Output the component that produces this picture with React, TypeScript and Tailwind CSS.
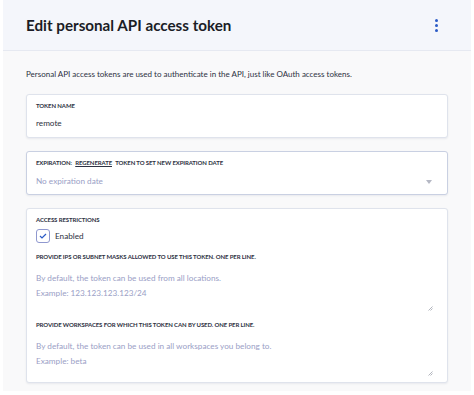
import React from 'react';

const Label: React.FC<{ children: React.ReactNode }> = ({ children }) => (
  <div className="text-[6px] font-bold uppercase leading-none tracking-[-0.1px] text-[#2d3142]">{children}</div>
);

const Grip = () => (
  <svg width="5" height="5" viewBox="0 0 5 5" className="absolute bottom-[0px] right-[5px]">
    <path d="M4.5 0.5 L0.5 4.5 M4.5 2.5 L2.5 4.5" stroke="#a0a3ad" strokeWidth="0.8" />
  </svg>
);

export default function App() {
  return (
    <div className="h-[395px] w-[474px] overflow-hidden bg-white" style={{ fontFamily: 'Lato, "Noto Sans", sans-serif' }}>
      <div className="mx-[3px] h-[391px] bg-[#f9f9fa]">
        <div className="flex h-[51px] items-center justify-between border-b border-[#e6e9f1] bg-[#f4f6fb] pl-[23px] pr-[33px]">
          <h1 className="text-[15.2px] font-bold text-[#1b1d26]">Edit personal API access token</h1>
          <div className="flex flex-col gap-[2px]">
            <span className="h-[3px] w-[3px] rounded-full bg-[#2b5bc6]" />
            <span className="h-[3px] w-[3px] rounded-full bg-[#2b5bc6]" />
            <span className="h-[3px] w-[3px] rounded-full bg-[#2b5bc6]" />
          </div>
        </div>

        <div className="px-[23px]">
          <p className="pt-[17px] text-[8px] leading-[12px] text-[#2d3142]">
            Personal API access tokens are used to authenticate in the API, just like OAuth access tokens.
          </p>

          <div className="mt-[14px] h-[44px] rounded-[3px] border border-[#dfe3ec] bg-white px-[9px] pt-[8px] shadow-[0_1px_2px_rgba(40,50,90,0.08)]">
            <Label>Token name</Label>
            <div className="mt-[10px] text-[8.2px] leading-none text-[#2d3142]">remote</div>
          </div>

          <div className="relative mt-[13px] h-[44px] rounded-[3px] border border-[#c9d0e2] bg-white px-[9px] pt-[8px] shadow-[0_1px_2px_rgba(40,50,90,0.08)]">
            <Label>
              Expiration: <span className="ml-[2px] mr-[2px] underline">Regenerate</span> token to set new expiration date
            </Label>
            <div className="mt-[11px] text-[8.2px] leading-none text-[#9aa0c6]">No expiration date</div>
            <svg width="6" height="4" viewBox="0 0 6 4" className="absolute right-[15px] top-[28px]">
              <path d="M0 0 L6 0 L3 4 Z" fill="#b5b8c4" />
            </svg>
          </div>

          <div className="mt-[13px] h-[175px] rounded-[3px] border border-[#dfe3ec] bg-white px-[9px] pt-[8px] shadow-[0_1px_2px_rgba(40,50,90,0.08)]">
            <Label>Access restrictions</Label>
            <div className="mt-[6px] flex items-center gap-[5px]">
              <span className="flex h-[14px] w-[14px] items-center justify-center rounded-[3px] border border-[#8f98cf] bg-white">
                <svg width="8" height="6" viewBox="0 0 8 6">
                  <path d="M1 3 L3 5 L7 1" stroke="#2b5bc6" strokeWidth="1.2" fill="none" />
                </svg>
              </span>
              <span className="text-[8.2px] text-[#2d3142]">Enabled</span>
            </div>

            <div className="relative h-[68px] pt-[11px]">
              <Label>Provide IPs or subnet masks allowed to use this token. One per line.</Label>
              <div className="mt-[11px] text-[8.2px] leading-[15px] text-[#9aa0c6]">
                <div>By default, the token can be used from all locations.</div>
                <div>Example: 123.123.123.123/24</div>
              </div>
              <Grip />
            </div>

            <div className="relative h-[65px] pt-[11px]">
              <Label>Provide workspaces for which this token can by used. One per line.</Label>
              <div className="mt-[11px] text-[8.2px] leading-[15px] text-[#9aa0c6]">
                <div>By default, the token can be used in all workspaces you belong to.</div>
                <div>Example: beta</div>
              </div>
              <Grip />
            </div>
          </div>
        </div>
      </div>
    </div>
  );
}
